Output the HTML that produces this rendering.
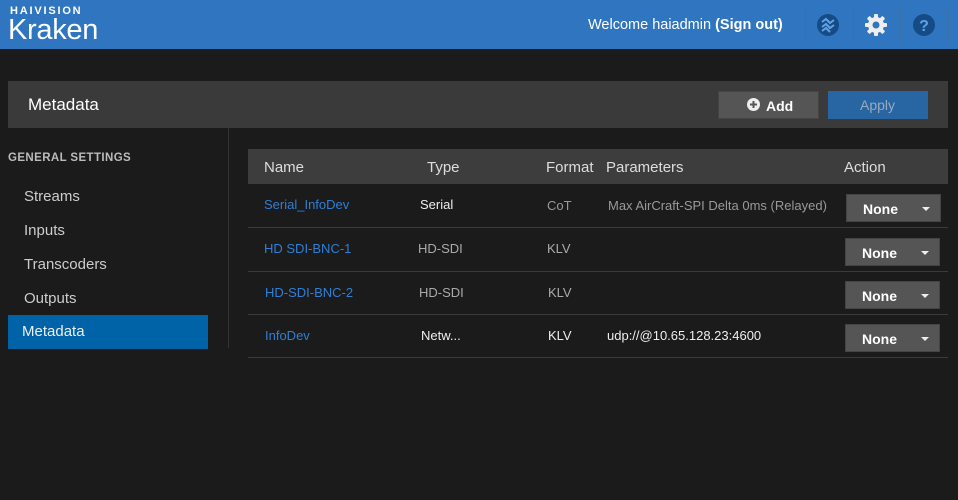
<!DOCTYPE html>
<html><head><meta charset="utf-8"><style>
*{margin:0;padding:0;box-sizing:border-box}
body{width:958px;height:500px;background:#1b1b1b;font-family:"Liberation Sans",sans-serif;position:relative;overflow:hidden;color:#ccc}
.a{position:absolute;white-space:nowrap}
.hdr{left:0;top:0;width:958px;height:49px;background:#2f75bf}
.sep{top:8px;width:1px;height:34px;background:#3a6fa8}
.lnk{color:#2f7fd6;font-size:13px}
.line{left:248px;width:700px;height:1px;background:#3a3a3a}
.btn{width:95px;height:28px;background:#555;border:1px solid #444;color:#fff;font-size:14px;font-weight:bold}
.btn span{position:absolute;left:16px;top:6px}
.btn i{position:absolute;right:10px;top:12px;border-left:4px solid transparent;border-right:4px solid transparent;border-top:4px solid #eee}
.side{font-size:15px;color:#ccc;left:24px}
</style></head><body>
<div class="a hdr"></div>
<div class="a" style="left:10px;top:5px;color:#fff;font-size:11px;font-weight:bold;letter-spacing:1.8px">HAIVISION</div>
<div class="a" style="left:8px;top:14px;color:#fff;font-size:29px;letter-spacing:-0.3px">Kraken</div>
<div class="a" style="left:588px;top:17px;color:#fff;font-size:14.5px">Welcome haiadmin <b>(Sign out)</b></div>
<div class="a sep" style="left:805px"></div><div class="a sep" style="left:853px"></div><div class="a sep" style="left:900px"></div><div class="a sep" style="left:948px"></div>
<svg class="a" style="left:816px;top:13px" width="24" height="24" viewBox="0 0 24 24"><circle cx="12" cy="12" r="11" fill="#154b86"/><path d="M6 9l4-3 4 4 4-3M6 14l4-3 4 4 4-3M6 18l4-3 4 4" stroke="#5fa3e6" stroke-width="2" fill="none"/></svg>
<svg class="a" style="left:864px;top:13px" width="24" height="24" viewBox="0 0 24 24"><g fill="#eee"><circle cx="12" cy="12" r="8"/><rect x="10" y="1" width="4" height="22" rx="1"/><rect x="1" y="10" width="22" height="4" rx="1"/><rect x="10" y="1" width="4" height="22" rx="1" transform="rotate(45 12 12)"/><rect x="10" y="1" width="4" height="22" rx="1" transform="rotate(-45 12 12)"/></g><circle cx="12" cy="12" r="3.5" fill="#2f75bf"/></svg>
<svg class="a" style="left:912px;top:13px" width="24" height="24" viewBox="0 0 24 24"><circle cx="12" cy="12" r="11" fill="#154b86"/><text x="12" y="18" text-anchor="middle" font-family="Liberation Sans" font-weight="bold" font-size="16" fill="#5fa3e6">?</text></svg>

<div class="a" style="left:8px;top:81px;width:940px;height:47px;background:#3a3a3a"></div>
<div class="a" style="left:28px;top:95px;color:#fff;font-size:17px">Metadata</div>
<div class="a" style="left:718px;top:91px;width:101px;height:28px;background:#555;border:1px solid #444;color:#fff;font-size:14px;font-weight:bold"><span class="a" style="left:47px;top:6px">Add</span></div>
<svg class="a" style="left:747px;top:98px" width="13" height="13"><circle cx="6.5" cy="6.5" r="6.5" fill="#eee"/><path d="M6.5 3v7M3 6.5h7" stroke="#555" stroke-width="2"/></svg>
<div class="a" style="left:828px;top:91px;width:100px;height:28px;background:#2766a3"><span class="a" style="left:32px;top:6px;color:#9ab;font-size:14px">Apply</span></div>

<div class="a" style="left:228px;top:128px;width:1px;height:220px;background:#333"></div>
<div class="a" style="left:8px;top:152px;font-size:11.5px;font-weight:bold;color:#bbb;letter-spacing:.4px">GENERAL SETTINGS</div>
<div class="a side" style="top:188px">Streams</div>
<div class="a side" style="top:222px">Inputs</div>
<div class="a side" style="top:256px">Transcoders</div>
<div class="a side" style="top:290px">Outputs</div>
<div class="a" style="left:8px;top:315px;width:200px;height:34px;background:#0063a8"></div>
<div class="a side" style="top:323px;left:22px;color:#eee">Metadata</div>

<div class="a" style="left:248px;top:149px;width:700px;height:35px;background:#3d3d3d"></div>
<div class="a" style="top:159px;left:264px;font-size:15px;color:#ddd">Name</div>
<div class="a" style="top:159px;left:427px;font-size:15px;color:#ddd">Type</div>
<div class="a" style="top:159px;left:546px;font-size:15px;color:#ddd">Format</div>
<div class="a" style="top:159px;left:606px;font-size:15px;color:#ddd">Parameters</div>
<div class="a" style="top:159px;left:844px;font-size:15px;color:#ddd">Action</div>

<div class="a line" style="top:227px"></div><div class="a line" style="top:271px"></div><div class="a line" style="top:314px"></div><div class="a line" style="top:357px"></div>

<div class="a lnk" style="left:264px;top:197px">Serial_InfoDev</div>
<div class="a" style="left:420px;top:197px;font-size:13px;color:#eee">Serial</div>
<div class="a" style="left:547px;top:198px;font-size:13px;color:#999">CoT</div>
<div class="a" style="left:608px;top:198px;font-size:13px;color:#999">Max AirCraft-SPI Delta 0ms (Relayed)</div>
<div class="a btn" style="left:846px;top:194px"><span>None</span><i></i></div>

<div class="a lnk" style="left:264px;top:241px">HD SDI-BNC-1</div>
<div class="a" style="left:418px;top:241px;font-size:13px;color:#aaa">HD-SDI</div>
<div class="a" style="left:547px;top:241px;font-size:13px;color:#aaa">KLV</div>
<div class="a btn" style="left:845px;top:238px"><span>None</span><i></i></div>

<div class="a lnk" style="left:265px;top:285px">HD-SDI-BNC-2</div>
<div class="a" style="left:419px;top:285px;font-size:13px;color:#aaa">HD-SDI</div>
<div class="a" style="left:548px;top:285px;font-size:13px;color:#aaa">KLV</div>
<div class="a btn" style="left:845px;top:281px"><span>None</span><i></i></div>

<div class="a lnk" style="left:265px;top:328px">InfoDev</div>
<div class="a" style="left:421px;top:328px;font-size:13px;color:#eee">Netw...</div>
<div class="a" style="left:548px;top:328px;font-size:13px;color:#eee">KLV</div>
<div class="a" style="left:607px;top:328px;font-size:13px;color:#eee">udp://@10.65.128.23:4600</div>
<div class="a btn" style="left:845px;top:324px"><span>None</span><i></i></div>
</body></html>
